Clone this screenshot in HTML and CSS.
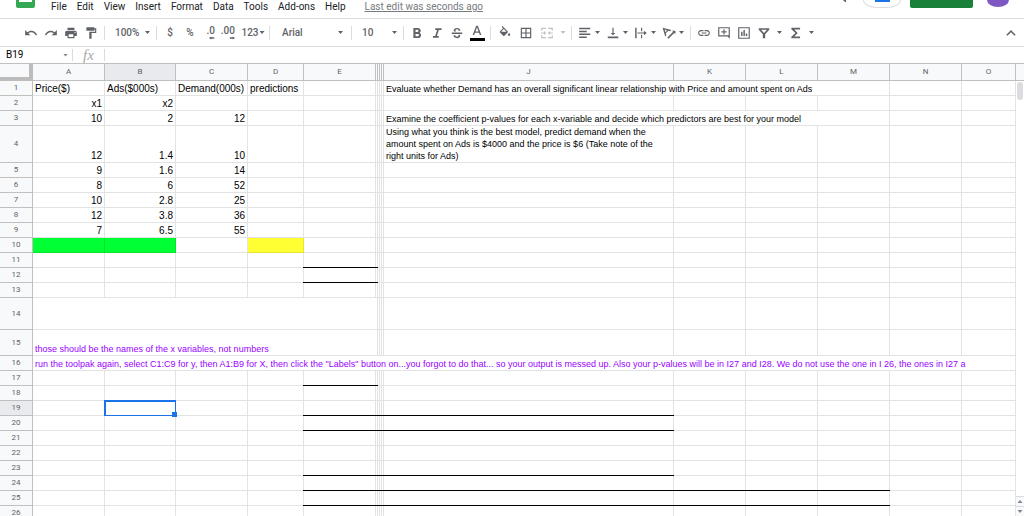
FILE: index.html
```html
<!DOCTYPE html>
<html lang="en">
<head>
<meta charset="utf-8">
<title>Spreadsheet</title>
<link rel="stylesheet" href="styles.css">
</head>
<body>
<header class="top">
  <span class="logo"></span>
  <nav class="menu">
    <button>File</button><button>Edit</button><button>View</button><button>Insert</button><button>Format</button><button>Data</button><button>Tools</button><button>Add-ons</button><button>Help</button>
  </nav>
  <a class="last-edit" href="#">Last edit was seconds ago</a>
  <div class="account">
    <svg class="trend" viewBox="0 0 4 2"><path d="M0 0h3v2H2z"/></svg>
    <button class="present" aria-label="Present"><span></span></button>
    <button class="share" aria-label="Share"></button>
    <button class="avatar" aria-label="Account"></button>
  </div>
</header>

<div class="toolbar" role="toolbar">
  <button class="tool" aria-label="Undo"><svg viewBox="0 0 24 24"><path d="M12.5 8c-2.65 0-5.05.99-6.9 2.6L2 7v9h9l-3.62-3.62c1.39-1.16 3.16-1.88 5.12-1.88 3.54 0 6.55 2.31 7.6 5.5l2.37-.78C21.08 11.03 17.15 8 12.5 8z"/></svg></button>
  <button class="tool" aria-label="Redo"><svg viewBox="0 0 24 24"><path d="M18.4 10.6C16.55 8.99 14.15 8 11.5 8c-4.65 0-8.58 3.03-9.96 7.22L3.9 16c1.05-3.19 4.05-5.5 7.6-5.5 1.95 0 3.73.72 5.12 1.88L13 16h9V7l-3.6 3.6z"/></svg></button>
  <button class="tool" aria-label="Print"><svg viewBox="0 0 24 24"><path d="M19 8H5c-1.66 0-3 1.34-3 3v6h4v4h12v-4h4v-6c0-1.66-1.34-3-3-3zm-3 11H8v-5h8v5zm3-7c-.55 0-1-.45-1-1s.45-1 1-1 1 .45 1 1-.45 1-1 1zm-1-9H6v4h12V3z"/></svg></button>
  <button class="tool" aria-label="Paint format"><svg viewBox="0 0 24 24"><path d="M18 4V3c0-.55-.45-1-1-1H5c-.55 0-1 .45-1 1v4c0 .55.45 1 1 1h12c.55 0 1-.45 1-1V6h1v4H9v11c0 .55.45 1 1 1h2c.55 0 1-.45 1-1v-9h8V4h-3z"/></svg></button>
  <i class="sep"></i>
  <label class="pick"><select aria-label="Zoom"><option>100%</option></select></label>
  <i class="sep"></i>
  <button class="tool">$</button>
  <button class="tool">%</button>
  <button class="tool decimals" aria-label="Decrease decimal places"><span>.0</span><svg viewBox="0 0 8 4"><path d="M0 2l3-2v1h4v2H3v1z"/></svg></button>
  <button class="tool decimals" aria-label="Increase decimal places"><span>.00</span><svg viewBox="0 0 8 4"><path d="M8 2L5 0v1H1v2h4v1z"/></svg></button>
  <button class="tool formats">123<i class="caret"></i></button>
  <i class="sep"></i>
  <label class="pick font"><select aria-label="Font"><option>Arial</option></select></label>
  <i class="sep"></i>
  <label class="pick"><select aria-label="Font size"><option>10</option></select></label>
  <i class="sep"></i>
  <button class="tool" aria-label="Bold"><svg viewBox="0 0 24 24"><path d="M16.6 11.8c1.1-.8 1.8-2 1.8-3.300 0-3-2.200-5.200-5.200-5.200H5.800v17.400h8.300c2.800 0 4.900-2.300 4.900-5 0-1.800-1-3.200-2.400-3.900zM9.500 6.400h3.300a1.800 1.800 0 0 1 0 3.700H9.500V6.400zm3.900 11.200H9.500v-4h3.900a2 2 0 0 1 0 4z"/></svg></button>
  <button class="tool" aria-label="Italic"><svg viewBox="0 0 24 24"><path d="M9 4v3h3.200l-3.400 10H5v3h10v-3h-3.200l3.400-10H20V4z"/></svg></button>
  <button class="tool" aria-label="Strikethrough"><svg viewBox="0 0 24 24"><path d="M3 11h18v2.500H3zM6.500 9.500C5.500 6 8 3.300 12 3.300c3.300 0 5.600 1.800 5.600 4.700h-3c0-1.500-1-2.300-2.700-2.300-2.500 0-3.300 2-1.500 3.800zM17.300 15c1 3.500-1.500 5.800-5.300 5.800-3.500 0-6-1.800-6-4.800h3c0 1.600 1.300 2.400 3 2.400 2 0 3.200-1.200 2.300-3.400z"/></svg></button>
  <button class="tool color" aria-label="Text color"><svg viewBox="0 0 24 24"><path d="M10.600 3L4.500 19h2.600l1.500-4h6.800l1.500 4h2.600L13.400 3zm-1.200 9.700L12 5.700l2.600 7z"/></svg></button>
  <i class="sep"></i>
  <button class="tool wide" aria-label="Fill color"><svg viewBox="0 0 24 24"><path d="M16.560 8.940L7.620 0 6.210 1.410l2.380 2.380-5.150 5.150c-.59.59-.59 1.540 0 2.120l5.500 5.500c.29.290.68.440 1.060.44s.77-.15 1.060-.44l5.500-5.500c.59-.58.590-1.530 0-2.120zM5.210 10L10 5.210 14.790 10H5.210zM19 11.500s-2 2.170-2 3.500c0 1.100.9 2 2 2s2-.9 2-2c0-1.330-2-3.500-2-3.500z"/></svg></button>
  <button class="tool" aria-label="Borders"><svg viewBox="0 0 24 24"><path d="M3 3v18h18V3H3zm8 16H5v-6h6v6zm0-8H5V5h6v6zm8 8h-6v-6h6v6zm0-8h-6V5h6v6z"/></svg></button>
  <button class="tool wide off" aria-label="Merge cells"><svg viewBox="0 0 24 24"><path d="M2 3h8v2H4v3H2zM14 3h8v5h-2V5h-6zM2 16h2v3h6v2H2zM20 16h2v5h-8v-2h6zM2 11h5V8.500l3.500 3.500L7 15.500V13H2zM22 11h-5V8.500L13.500 12l3.500 3.500V13h5z"/></svg></button>
  <button class="drop off" aria-label="Merge options"><i class="caret"></i></button>
  <i class="sep"></i>
  <button class="tool menu-tool" aria-label="Horizontal align"><svg viewBox="0 0 24 24"><path d="M2 3h19v2.500H2zM2 8h13v2.500H2zM2 13h19v2.500H2zM2 18h13v2.500H2z"/></svg><i class="caret"></i></button>
  <button class="tool menu-tool" aria-label="Vertical align"><svg viewBox="0 0 24 24"><path d="M16 12h-3V3h-2v9H8l4 4 4-4zM3 18v3h18v-3H3z"/></svg><i class="caret"></i></button>
  <button class="tool menu-tool" aria-label="Text wrapping"><svg viewBox="0 0 24 24"><path d="M2 3h2.500v18H2zM12 3h2v6h-2zM12 15h2v6h-2zM6 11h11V8l5 4-5 4v-3H6z"/></svg><i class="caret"></i></button>
  <button class="tool menu-tool" aria-label="Text rotation"><svg viewBox="0 0 24 24"><path d="M1 3l15 4-2 2-3-.8L6.500 12.500l1 3.500-2 2zm3.500 3l1.400 4.600 2.800-3zM9 20L19 10l-2-2h6v6l-2-2-10 10z"/></svg><i class="caret"></i></button>
  <i class="sep"></i>
  <button class="tool" aria-label="Insert link"><svg viewBox="0 0 24 24"><path d="M3.900 12c0-1.710 1.390-3.100 3.100-3.100h4V7H7c-2.760 0-5 2.240-5 5s2.240 5 5 5h4v-1.900H7c-1.710 0-3.100-1.390-3.100-3.100zM8 13h8v-2H8v2zm9-6h-4v1.900h4c1.710 0 3.100 1.390 3.100 3.100s-1.390 3.100-3.100 3.100h-4V17h4c2.760 0 5-2.240 5-5s-2.240-5-5-5z"/></svg></button>
  <button class="tool" aria-label="Insert comment"><svg viewBox="0 0 24 24"><path d="M22 2H2v16h16l4 4zM4 4h16v12H4zM11 5.500h2V9h3.500v2H13v3.500h-2V11H7.500V9H11z"/></svg></button>
  <button class="tool" aria-label="Insert chart"><svg viewBox="0 0 24 24"><path d="M2 2v20h20V2H2zm18 18H4V4h16v16zM7 10h2.500v7H7zM11 7h2.500v10H11zM15 13h2.500v4H15z"/></svg></button>
  <button class="tool menu-tool roomy" aria-label="Filter"><svg viewBox="0 0 24 24"><path d="M3 4h18v2.500L14 14v7h-4v-7L3 6.500zm4 2.500l4.500 5h1l4.500-5z"/></svg><i class="caret"></i></button>
  <button class="tool menu-tool roomy" aria-label="Functions"><svg viewBox="0 0 24 24"><path d="M19 3H4v2.500L11 12l-7 6.500V21h15v-3H9l6-6-6-6h10z"/></svg><i class="caret"></i></button>
  <button class="tool collapse" aria-label="Hide the menus"><svg viewBox="0 0 24 24"><path d="M12 7l-8 8 1.800 1.800L12 10.600l6.200 6.200L20 15z"/></svg></button>
</div>

<div class="formula-bar">
  <label class="name-box"><input aria-label="Name box" value="B19"><i class="caret"></i></label>
  <label class="fx" for="formula">fx</label>
  <input id="formula" class="formula" aria-label="Formula">
</div>

<main class="sheet">
<div class="grid">
<table>
<colgroup><col class="c-head"><col class="c-std"><col class="c-b"><col class="c-std"><col class="c-d"><col class="c-std"><col class="c-thin" span="4"><col class="c-j"><col class="c-std" span="4"><col class="c-o"></colgroup>
<thead>
<tr><th class="corner"></th><th>A</th><th class="sel">B</th><th>C</th><th>D</th><th>E</th><th></th><th></th><th></th><th></th><th>J</th><th>K</th><th>L</th><th>M</th><th>N</th><th>O</th></tr>
</thead>
<tbody>
<tr><th>1</th><td>Price($)</td><td>Ads($000s)</td><td>Demand(000s)</td><td>predictions</td><td></td><td></td><td></td><td></td><td></td><td colspan="4" class="sentence">Evaluate whether Demand has an overall significant linear relationship with Price and amount spent on Ads</td><td></td><td></td></tr>
<tr><th>2</th><td class="num">x1</td><td class="num">x2</td><td></td><td></td><td></td><td></td><td></td><td></td><td></td><td></td><td></td><td></td><td></td><td></td><td></td></tr>
<tr><th>3</th><td class="num">10</td><td class="num">2</td><td class="num">12</td><td></td><td></td><td></td><td></td><td></td><td></td><td colspan="4" class="sentence">Examine the coefficient p-values for each x-variable and decide which predictors are best for your model</td><td></td><td></td></tr>
<tr class="row-4"><th>4</th><td class="num">12</td><td class="num">1.4</td><td class="num">10</td><td></td><td></td><td></td><td></td><td></td><td></td><td class="sentence wrap">Using what you think is the best model, predict demand when the amount spent on Ads is $4000 and the price is $6 (Take note of the right units for Ads)</td><td></td><td></td><td></td><td></td><td></td></tr>
<tr><th>5</th><td class="num">9</td><td class="num">1.6</td><td class="num">14</td><td></td><td></td><td></td><td></td><td></td><td></td><td></td><td></td><td></td><td></td><td></td><td></td></tr>
<tr><th>6</th><td class="num">8</td><td class="num">6</td><td class="num">52</td><td></td><td></td><td></td><td></td><td></td><td></td><td></td><td></td><td></td><td></td><td></td><td></td></tr>
<tr><th>7</th><td class="num">10</td><td class="num">2.8</td><td class="num">25</td><td></td><td></td><td></td><td></td><td></td><td></td><td></td><td></td><td></td><td></td><td></td><td></td></tr>
<tr><th>8</th><td class="num">12</td><td class="num">3.8</td><td class="num">36</td><td></td><td></td><td></td><td></td><td></td><td></td><td></td><td></td><td></td><td></td><td></td><td></td></tr>
<tr><th>9</th><td class="num">7</td><td class="num">6.5</td><td class="num">55</td><td></td><td></td><td></td><td></td><td></td><td></td><td></td><td></td><td></td><td></td><td></td><td></td></tr>
<tr><th>10</th><td class="green"></td><td class="green"></td><td></td><td class="yellow"></td><td></td><td></td><td></td><td></td><td></td><td></td><td></td><td></td><td></td><td></td><td></td></tr>
<tr><th>11</th><td></td><td></td><td></td><td></td><td class="line"></td><td class="line"></td><td></td><td></td><td></td><td></td><td></td><td></td><td></td><td></td><td></td></tr>
<tr><th>12</th><td></td><td></td><td></td><td></td><td class="line"></td><td class="line"></td><td></td><td></td><td></td><td></td><td></td><td></td><td></td><td></td><td></td></tr>
<tr><th>13</th><td></td><td></td><td></td><td></td><td></td><td></td><td></td><td></td><td></td><td></td><td></td><td></td><td></td><td></td><td></td></tr>
<tr class="row-14"><th>14</th><td colspan="6"></td><td></td><td></td><td></td><td></td><td></td><td></td><td></td><td></td><td></td></tr>
<tr class="row-15"><th>15</th><td colspan="6" class="sentence note">those should be the names of the x variables, not numbers</td><td></td><td></td><td></td><td></td><td></td><td></td><td></td><td></td><td></td></tr>
<tr><th>16</th><td colspan="15" class="sentence note">run the toolpak again, select C1:C9 for y, then A1:B9 for X, then click the "Labels" button on...you forgot to do that... so your output is messed up. Also your p-values will be in I27 and I28. We do not use the one in I 26, the ones in I27 a</td></tr>
<tr><th>17</th><td></td><td></td><td></td><td></td><td class="line"></td><td class="line"></td><td></td><td></td><td></td><td></td><td></td><td></td><td></td><td></td><td></td></tr>
<tr><th>18</th><td></td><td></td><td></td><td></td><td></td><td></td><td></td><td></td><td></td><td></td><td></td><td></td><td></td><td></td><td></td></tr>
<tr><th class="sel">19</th><td></td><td class="active"><span class="cursor"></span></td><td></td><td></td><td class="line"></td><td class="line"></td><td class="line"></td><td class="line"></td><td class="line"></td><td class="line"></td><td></td><td></td><td></td><td></td><td></td></tr>
<tr><th>20</th><td></td><td></td><td></td><td></td><td class="line"></td><td class="line"></td><td class="line"></td><td class="line"></td><td class="line"></td><td class="line"></td><td></td><td></td><td></td><td></td><td></td></tr>
<tr><th>21</th><td></td><td></td><td></td><td></td><td></td><td></td><td></td><td></td><td></td><td></td><td></td><td></td><td></td><td></td><td></td></tr>
<tr><th>22</th><td></td><td></td><td></td><td></td><td></td><td></td><td></td><td></td><td></td><td></td><td></td><td></td><td></td><td></td><td></td></tr>
<tr><th>23</th><td></td><td></td><td></td><td></td><td class="line"></td><td class="line"></td><td class="line"></td><td class="line"></td><td class="line"></td><td class="line"></td><td></td><td></td><td></td><td></td><td></td></tr>
<tr><th>24</th><td></td><td></td><td></td><td></td><td class="line"></td><td class="line"></td><td class="line"></td><td class="line"></td><td class="line"></td><td class="line"></td><td class="line"></td><td class="line"></td><td class="line"></td><td></td><td></td></tr>
<tr><th>25</th><td></td><td></td><td></td><td></td><td class="line"></td><td class="line"></td><td class="line"></td><td class="line"></td><td class="line"></td><td class="line"></td><td class="line"></td><td class="line"></td><td class="line"></td><td></td><td></td></tr>
<tr><th>26</th><td></td><td></td><td></td><td></td><td></td><td></td><td></td><td></td><td></td><td></td><td></td><td></td><td></td><td></td><td></td></tr>
</tbody>
</table>
</div>
<div class="scroll">
  <div class="scroll-head"></div>
  <div class="thumb"></div>
  <button class="step" aria-label="Scroll up"><i class="caret up"></i></button>
  <button class="step" aria-label="Scroll down"><i class="caret"></i></button>
</div>
</main>
</body>
</html>
```

FILE: styles.css
```css
* { box-sizing: border-box; }
body {
  margin: 0;
  height: 100vh;
  overflow: hidden;
  display: flex;
  flex-direction: column;
  background: #fff;
  color: #202124;
  font: 10px/14px Roboto, "Liberation Sans", sans-serif;
}
button, input, select {
  margin: 0;
  padding: 0;
  border: 0;
  background: none;
  font: inherit;
  color: inherit;
  appearance: none;
  outline: none;
}
svg { display: block; fill: currentColor; }

/* Title strip */
.top {
  flex: none;
  height: 19px;
  display: flex;
  align-items: flex-start;
  padding: 0 15px 0 16px;
  border-bottom: 1px solid #dadce0;
}
.logo { width: 19px; height: 8px; margin-right: 16px; border-radius: 0 0 2px 2px; background: #34a853; display: flex; justify-content: center; }
.logo::before { content: ""; width: 13px; height: 2px; background: #fff; }
.menu { display: flex; gap: 10px; margin-right: 19px; }
.last-edit { color: #777b80; text-decoration: underline; }
.account { margin-left: auto; display: flex; align-items: flex-start; }
.trend { width: 4px; height: 2px; margin-right: 16px; color: #5f6368; }
.present { width: 38px; height: 8px; margin-right: 9px; border: 1px solid #dadce0; border-top: 0; border-radius: 0 0 14px 14px / 0 0 8px 8px; display: flex; justify-content: center; }
.present span { width: 15px; height: 2px; background: #1a73e8; }
.share { width: 63px; height: 8px; margin-right: 14px; border-radius: 0 0 2px 2px; background: #188038; }
.avatar { width: 22px; height: 7px; border-radius: 0 0 11px 11px / 0 0 7px 7px; background: #7e57c2; }

/* Toolbar */
.toolbar {
  flex: none;
  height: 28px;
  display: flex;
  align-items: center;
  padding: 0 3px 0 21px;
  border-bottom: 1px solid #dadce0;
  color: #5f6368;
  font-weight: 500;
}
.tool { flex: none; width: 20px; height: 20px; display: flex; align-items: center; justify-content: center; }
.tool svg { width: 14px; height: 14px; }
.wide { width: 22px; }
.off { color: #bdc1c6; }
.sep { flex: none; width: 1px; height: 14px; margin: 0 3px; background: #dadce0; }
.caret { flex: none; width: 5px; height: 3px; background: currentColor; clip-path: polygon(0 0, 100% 0, 50% 100%); }
.caret.up { clip-path: polygon(50% 0, 100% 100%, 0 100%); }
.pick { flex: none; width: 45px; display: flex; align-items: center; padding: 0 3px 0 7px; }
.pick select { flex: 1; min-width: 0; }
.pick::after { content: ""; width: 5px; height: 3px; background: currentColor; clip-path: polygon(0 0, 100% 0, 50% 100%); }
.font { width: 75px; padding: 0 5px 0 9px; }
.decimals { flex-direction: column; align-items: flex-end; padding-right: 5px; }
.decimals span { line-height: 10px; }
.tool.decimals svg { width: 6px; height: 4px; }
.formats { width: 26px; gap: 1px; }
.color { flex-direction: column; }
.color::after { content: ""; width: 15px; height: 3px; background: #000; }
.drop { width: 10px; height: 20px; display: flex; align-items: center; justify-content: center; }
.menu-tool { width: 28px; justify-content: flex-start; gap: 3px; padding-left: 3px; }
.roomy { width: 32px; gap: 6px; }
.collapse { margin-left: auto; }

/* Formula bar */
.formula-bar { flex: none; height: 17px; display: flex; align-items: center; border-bottom: 1px solid #c0c0c0; color: #000; }
.name-box { width: 73px; height: 12px; display: flex; align-items: center; padding: 0 4px 0 6px; border-right: 1px solid #dadce0; }
.name-box input { flex: 1; min-width: 0; }
.name-box .caret { color: #80868b; }
.fx { width: 32px; height: 12px; padding-left: 10px; border-right: 1px solid #dadce0; color: #a5a8ac; font: italic 15px/12px "Liberation Serif", serif; }
.formula { flex: 1; height: 12px; }

/* Sheet */
.sheet { flex: 1; min-height: 0; display: flex; overflow: hidden; }
.grid { flex: 1; min-width: 0; overflow: hidden; }
table { width: 1016px; table-layout: fixed; border-collapse: separate; border-spacing: 0; font: 10px/12px "Liberation Sans", Arial, sans-serif; color: #000; }
.c-head { width: 33px; }
.c-std { width: 72px; }
.c-b { width: 71px; }
.c-d { width: 56px; }
.c-thin { width: 2px; }
.c-j { width: 290px; }
.c-o { width: 54px; }
tr { height: 15px; }
.row-4 { height: 37px; }
.row-14 { height: 32px; }
.row-15 { height: 26px; }
th { padding: 0; background: #f8f9fa; border: solid #c0c0c0; border-width: 0 1px 1px 0; color: #5f6368; font: 8px/12px Roboto, sans-serif; vertical-align: middle; }
thead tr { height: 17px; }
.corner { border-width: 0 4px 4px 0; border-color: #bcbcbc; }
th.sel { background: #e8eaed; }
td { padding: 0; border: solid #e2e3e3; border-width: 0 1px 1px 0; vertical-align: bottom; white-space: nowrap; overflow: hidden; }
td:not(:empty) { padding: 0 2px; }
.num { text-align: right; }
.sentence { font-size: 9px; }
td.wrap { white-space: normal; }
.green { background: #00ff33; border-color: #00e62e; }
.yellow { background: #ffff33; border-color: #e6e62e; }
td.line { position: relative; overflow: visible; }
.line::after { content: ""; position: absolute; inset: auto -1px -1px -1px; height: 1px; background: #000; }
.note { color: #9900ff; }
td.active { position: relative; overflow: visible; padding: 0; }
.cursor { position: absolute; inset: -1px; border: 2px solid #1a73e8; border-width: 2px 1px 1px 2px; }
.cursor::after { content: ""; position: absolute; right: -2px; bottom: -2px; width: 5px; height: 5px; background: #1a73e8; }

/* Scroll bar */
.scroll { flex: none; width: 8px; display: flex; flex-direction: column; align-items: center; color: #80868b; }
.scroll-head { width: 100%; height: 17px; background: #f8f9fa; border-bottom: 1px solid #c0c0c0; }
.thumb { width: 6px; height: 18px; margin: 1px 0 auto; border-radius: 3px; background: #dadce0; }
.step { width: 100%; height: 10px; display: flex; align-items: center; justify-content: center; border-top: 1px solid #dadce0; background: #f8f9fa; }
```
